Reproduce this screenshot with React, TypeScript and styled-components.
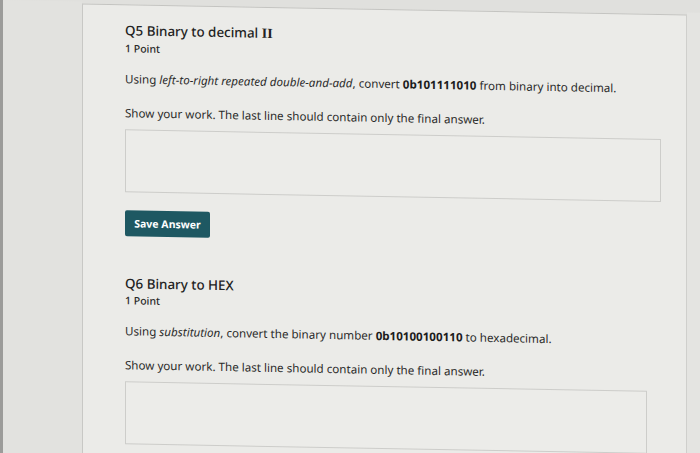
import styled, { createGlobalStyle } from 'styled-components';

const GlobalStyle = createGlobalStyle`
  html, body {
    margin: 0;
    padding: 0;
    background: #e0e0dd;
    overflow: hidden;
  }
  body {
    font-family: "Noto Sans", "Open Sans", sans-serif;
    color: #262626;
  }
`;

const Screen = styled.div`
  display: flex;
  height: 470px;
  width: 700px;
  transform: skewY(1.05deg);
  transform-origin: 0 0;
`;

const LeftRail = styled.div`
  width: 79px;
  border-left: 3px solid #9c9c9a;
  background: #e2e2df;
`;

const Panel = styled.div`
  width: 605px;
  margin-top: 2px;
  padding: 16px 0 0 42px;
  box-sizing: border-box;
  background: #ebebe8;
  border-top: 1px solid #c4c4c1;
  border-left: 1px solid #c8c8c5;
  border-right: 1px solid #cfcfcc;
`;

const RightRail = styled.div`
  flex: 1;
  background: #e4e4e1;
`;

const Question = styled.section`
  display: flex;
  flex-direction: column;
  margin-bottom: 38px;
`;

const Title = styled.h2`
  margin: 0;
  font-size: 13.4px;
  font-weight: 500;
  line-height: 18px;
  color: #222;
`;

const Roman = styled.span`
  font-family: "Liberation Serif", serif;
  font-weight: 700;
  font-size: 14px;
`;

const Points = styled.div`
  margin-top: 1px;
  font-size: 10.5px;
  font-weight: 500;
  line-height: 14px;
  color: #2a2a2a;
`;

const Para = styled.p<{ $gap: number }>`
  margin: ${(p) => p.$gap}px 0 0;
  font-size: 11.6px;
  line-height: 16px;
  color: #2b2b2b;

  em {
    font-style: italic;
  }
  strong {
    font-weight: 700;
    color: #1c1c1c;
  }
`;

const AnswerBox = styled.div<{ $w: number }>`
  margin-top: 8px;
  width: ${(p) => p.$w}px;
  height: 63px;
  box-sizing: border-box;
  border: 1px solid #cdcdca;
  background: #ecece9;
`;

const SaveButton = styled.button`
  align-self: flex-start;
  margin-top: 18px;
  width: 85px;
  height: 26px;
  border: none;
  border-radius: 2px;
  background: #1e5862;
  color: #fff;
  font-family: "Noto Sans", sans-serif;
  font-size: 10.5px;
  font-weight: 700;
  cursor: pointer;
`;

const App = () => (
  <>
    <GlobalStyle />
    <Screen>
      <LeftRail />
      <Panel>
        <Question>
          <Title>
            Q5 Binary to decimal <Roman>II</Roman>
          </Title>
          <Points>1 Point</Points>
          <Para $gap={16}>
            Using <em>left-to-right repeated double-and-add</em>, convert <strong>0b101111010</strong> from binary
            into decimal.
          </Para>
          <Para $gap={18}>Show your work. The last line should contain only the final answer.</Para>
          <AnswerBox $w={536} />
          <SaveButton type="button">Save Answer</SaveButton>
        </Question>
        <Question>
          <Title>Q6 Binary to HEX</Title>
          <Points>1 Point</Points>
          <Para $gap={16}>
            Using <em>substitution</em>, convert the binary number <strong>0b10100100110</strong> to hexadecimal.
          </Para>
          <Para $gap={18}>Show your work. The last line should contain only the final answer.</Para>
          <AnswerBox $w={522} />
          <SaveButton type="button">Save Answer</SaveButton>
        </Question>
      </Panel>
      <RightRail />
    </Screen>
  </>
);

export default App;
